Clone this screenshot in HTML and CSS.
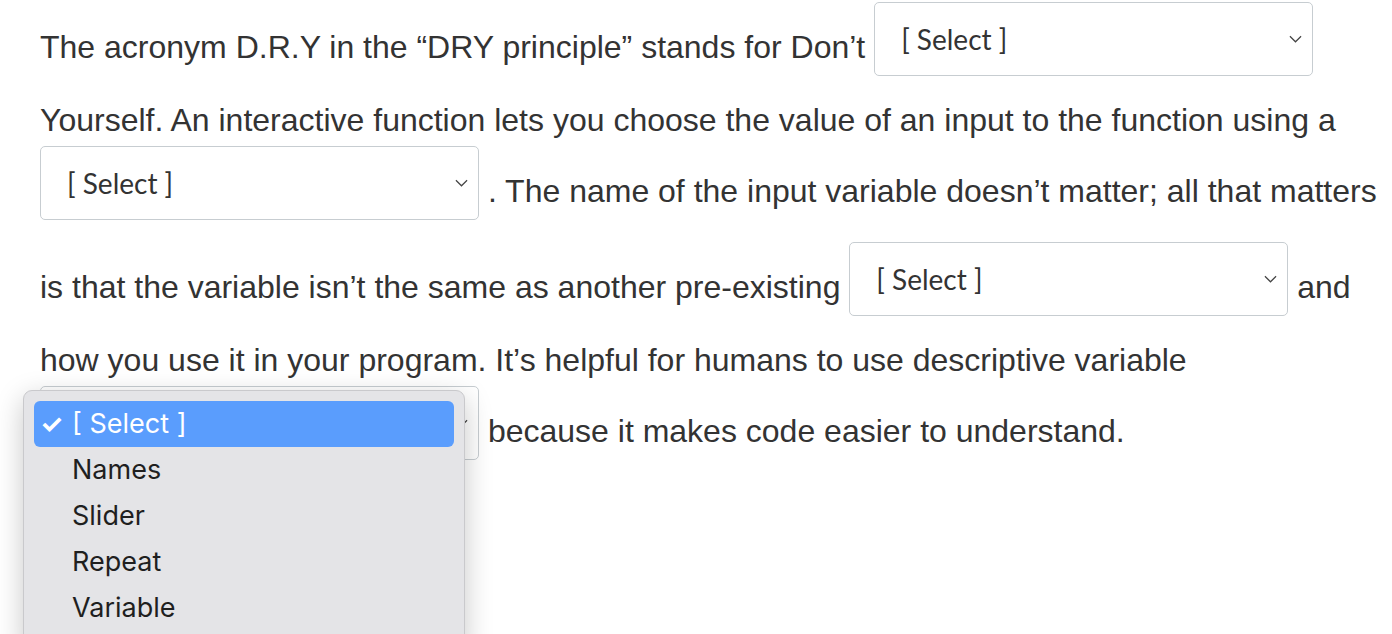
FILE: index.html
```html
<!DOCTYPE html>
<html lang="en">
<head>
<meta charset="UTF-8" />
<meta name="viewport" content="width=device-width, initial-scale=1" />
<title>DRY principle - Fill in the blanks</title>
<link rel="stylesheet" href="styles.css">
</head>
<body>

<div class="question">
  <p class="question-text">The acronym D.R.Y in the “DRY principle” stands for Don’t
    <span class="select"><span class="select-value">[ Select ]</span><svg class="chevron" viewBox="0 0 14 8"><path d="M1 1l6 6 6-6"/></svg></span>
    Yourself. An interactive function lets you choose the value of an input to the function using a
    <span class="select"><span class="select-value">[ Select ]</span><svg class="chevron" viewBox="0 0 14 8"><path d="M1 1l6 6 6-6"/></svg></span>
    . The name of the input variable doesn’t matter; all that matters is that the variable isn’t the same as another pre-existing
    <span class="select"><span class="select-value">[ Select ]</span><svg class="chevron" viewBox="0 0 14 8"><path d="M1 1l6 6 6-6"/></svg></span>
    and how you use it in your program. It’s helpful for humans to use descriptive variable
    <span class="select-wrap"><span class="select"><span class="select-value">[ Select ]</span><svg class="chevron" viewBox="0 0 14 8"><path d="M1 1l6 6 6-6"/></svg></span><span class="menu">
        <span class="menu-item selected"><span class="check">✓</span>[ Select ]</span>
        <span class="menu-item">Names</span>
        <span class="menu-item">Slider</span>
        <span class="menu-item">Repeat</span>
        <span class="menu-item">Variable</span>
      </span></span>
    because it makes code easier to understand.
  </p>
</div>

</body>
</html>
```

FILE: styles.css
```css
html {
  overflow: hidden;
}
body {
  margin: 0;
  background: #fff;
  color: #333;
  font-family: "Liberation Sans", Arial, Helvetica, sans-serif;
}
.question {
  padding: 0 10px 260px 40px;
}
.question-text {
  margin: 0;
  font-size: 32px;
  line-height: 48px;
}
.select {
  display: inline-flex;
  align-items: center;
  justify-content: space-between;
  box-sizing: border-box;
  width: 439px;
  height: 74px;
  margin: 2px 0 20px;
  padding: 0 10px 0 26px;
  border: 1px solid #c7cdd1;
  border-radius: 5px;
  background: #fff;
  vertical-align: 8px;
  font-family: Lato, "Liberation Sans", sans-serif;
  font-size: 28px;
  color: #333;
}
.select-value {
  line-height: 30px;
}
.chevron {
  width: 13px;
  height: 8px;
  fill: none;
  stroke: #444;
  stroke-width: 1.3;
}
.select-wrap {
  position: relative;
  display: inline-block;
}
.menu {
  position: absolute;
  left: -17px;
  top: 6px;
  width: 420px;
  padding: 10px 10px 20px;
  background: #e4e4e7;
  border: 1px solid #c9c9cc;
  border-radius: 9px;
  box-shadow: 0 8px 28px rgba(0, 0, 0, 0.22);
  font-family: Inter, "Noto Sans", sans-serif;
  font-size: 27px;
  line-height: 46px;
  color: #1f1f1f;
  z-index: 2;
}
.menu-item {
  display: flex;
  align-items: center;
  height: 46px;
  padding-left: 38px;
  border-radius: 6px;
}
.menu-item.selected {
  background: #5a9dfd;
  color: #fff;
  padding-left: 6px;
}
.check {
  width: 32px;
  font-size: 26px;
  font-weight: 700;
}
```
